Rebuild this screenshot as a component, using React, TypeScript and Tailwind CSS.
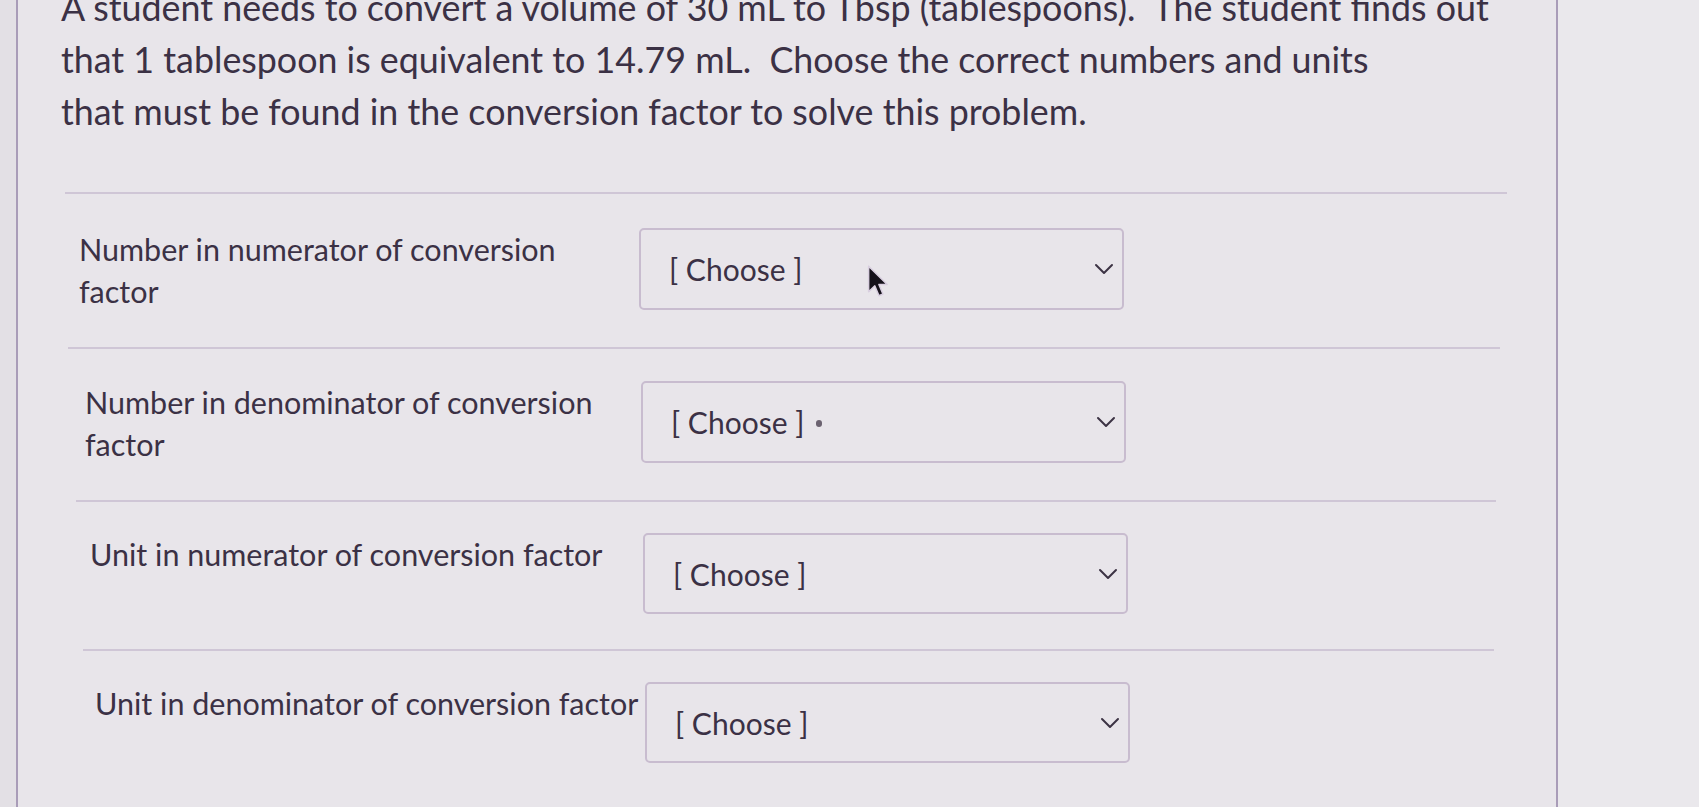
import React from "react";

type Row = {
  lines: string[];
  lineCls: string;
  padCls: string;
  labelCls: string;
  boxCls: string;
  cursor?: boolean;
  dot?: boolean;
};

const rows: Row[] = [
  {
    lines: ["Number in numerator of conversion", "factor"],
    lineCls: "ml-[47px] mr-[49px]",
    padCls: "pt-[34px] pb-[35px] pl-[14px]",
    labelCls: "w-[560px]",
    boxCls: "h-[82px]",
    cursor: true,
  },
  {
    lines: ["Number in denominator of conversion", "factor"],
    lineCls: "ml-[50px] mr-[56px]",
    padCls: "pt-[32px] pb-[35px] pl-[17px]",
    labelCls: "w-[556px]",
    boxCls: "h-[82px]",
    dot: true,
  },
  {
    lines: ["Unit in numerator of conversion factor"],
    lineCls: "ml-[58px] mr-[60px]",
    padCls: "pt-[31px] pb-[35px] pl-[14px]",
    labelCls: "w-[553px]",
    boxCls: "h-[81px]",
  },
  {
    lines: ["Unit in denominator of conversion factor"],
    lineCls: "ml-[65px] mr-[62px]",
    padCls: "pt-[31px] pb-[34px] pl-[12px]",
    labelCls: "w-[550px]",
    boxCls: "h-[81px]",
  },
];

function Chevron() {
  return (
    <svg width="20" height="12" viewBox="0 0 20 12" fill="none">
      <polyline
        points="2,2 10,10 18,2"
        stroke="#3c3344"
        strokeWidth="2"
        strokeLinecap="round"
        strokeLinejoin="round"
      />
    </svg>
  );
}

function Cursor() {
  return (
    <svg width="24" height="36" viewBox="0 0 22 32">
      <path
        d="M1.5 1.5 L1.5 25 L7.2 19.6 L11 28.6 L14.6 27 L10.9 18.3 L18.5 18.3 Z"
        fill="#15111a"
        stroke="#d9cfe0"
        strokeWidth="1.4"
        strokeLinejoin="round"
      />
    </svg>
  );
}

export default function App() {
  return (
    <div className="w-[1699px] h-[807px] overflow-hidden flex bg-[#eae8ec] font-['Lato','Noto_Sans',sans-serif] text-[#3b3145]">
      <div className="w-[16px] h-full bg-[#e3e0e5]" />
      <div className="w-[1542px] h-full border-l-2 border-r-2 border-[#a99cb8] bg-[#e8e5ea]">
        <p className="mt-[-18px] pl-[43px] text-[35.8px] leading-[52px] whitespace-nowrap">
          A student needs to convert a volume of 30 mL to Tbsp (tablespoons).&nbsp; The student finds out
          <br />
          that 1 tablespoon is equivalent to 14.79 mL.&nbsp; Choose the correct numbers and units
          <br />
          that must be found in the conversion factor to solve this problem.
        </p>
        <div className="mt-[54px]">
          {rows.map((r, i) => (
            <div key={i} className={"border-t-2 border-[#cfc6d6] " + r.lineCls}>
              <div className={"flex " + r.padCls}>
                <div className={"shrink-0 text-[30.5px] leading-[42px] whitespace-nowrap " + r.labelCls}>
                  {r.lines.map((l, j) => (
                    <div key={j}>{l}</div>
                  ))}
                </div>
                <div
                  className={
                    "relative shrink-0 w-[485px] flex items-center justify-between pl-[28px] pr-[8px] rounded-[5px] border-2 border-[#c8bccf] " +
                    r.boxCls
                  }
                >
                  <span className="text-[30px] leading-none">[ Choose ]</span>
                  <Chevron />
                  {r.cursor && (
                    <div className="absolute left-[226px] top-[34px]">
                      <Cursor />
                    </div>
                  )}
                  {r.dot && (
                    <div className="absolute left-[173px] top-[37px] w-[6px] h-[7px] rounded-full bg-[#6b6270]" />
                  )}
                </div>
              </div>
            </div>
          ))}
        </div>
      </div>
    </div>
  );
}
